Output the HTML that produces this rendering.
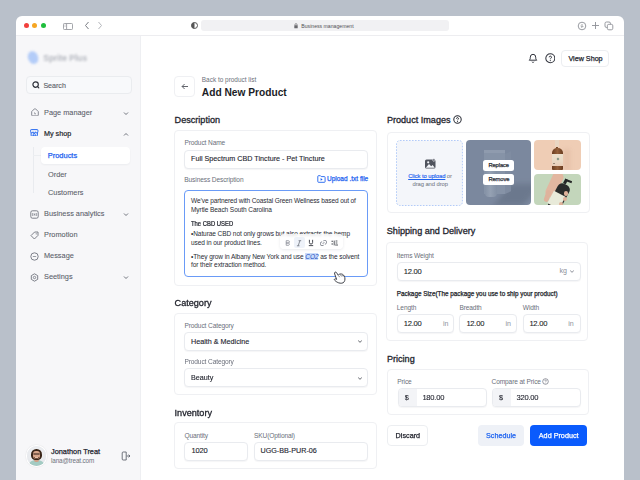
<!DOCTYPE html>
<html><head><meta charset="utf-8">
<style>
*{margin:0;padding:0;box-sizing:border-box}
html,body{width:640px;height:480px;overflow:hidden}
body{background:#b9c0ca;position:relative;font-family:"Liberation Sans",sans-serif;color:#1d1f2a}
.a{position:absolute;white-space:nowrap}
.win{position:absolute;left:16px;top:16px;width:608px;height:470px;background:#fff;border-radius:6px 6px 0 0;overflow:hidden}
.tb{position:absolute;left:16px;top:16px;width:608px;height:20px;border-bottom:1px solid #ededf0}
.dot{position:absolute;width:5px;height:5px;border-radius:50%;top:23px}
.side{position:absolute;left:16px;top:36px;width:125px;height:450px;background:#f7f7f9;border-right:1px solid #eeeff2}
.t{position:absolute;white-space:nowrap;line-height:10px}
.card{position:absolute;border:1px solid #eff0f3;border-radius:4px;background:#fff}
.inp{position:absolute;border:1px solid #e9ebef;border-radius:4px;background:#fff;box-shadow:0 1px 1px rgba(16,24,40,.04)}
.lbl{position:absolute;white-space:nowrap;font-size:6.6px;letter-spacing:-0.12px;color:#6b6f7b;line-height:8px}
.h{position:absolute;white-space:nowrap;font-size:9.1px;color:#23252e;line-height:12px;-webkit-text-stroke:0.3px #23252e}
.val{position:absolute;white-space:nowrap;font-size:7.2px;color:#23252f;line-height:10px;-webkit-text-stroke:0.12px #23252f}
.sb{-webkit-text-stroke:0.25px currentColor}
.nav{position:absolute;left:44px;white-space:nowrap;font-size:7.35px;color:#5a5e69;line-height:10px;-webkit-text-stroke:0.08px #5a5e69}
.chev{position:absolute}
</style></head><body>
<div class="win"></div>
<div class="tb"></div>
<div class="dot" style="left:23.5px;background:#f2403c"></div>
<div class="dot" style="left:32px;background:#f6a623"></div>
<div class="dot" style="left:40.5px;background:#1fbe3c"></div>
<!-- sidebar toggle -->
<svg class="a" style="left:62.5px;top:22.5px" width="10" height="7" viewBox="0 0 10 7"><rect x="0.5" y="0.5" width="9" height="6" rx="0.8" fill="none" stroke="#9a9ca2" stroke-width="0.9"/><line x1="3.6" y1="0.5" x2="3.6" y2="6.5" stroke="#9a9ca2" stroke-width="0.9"/><path d="M1.5 2 H2.6 M1.5 3.3 H2.6" stroke="#9a9ca2" stroke-width="0.6"/></svg>
<svg class="a" style="left:84px;top:21px" width="6" height="9" viewBox="0 0 6 9"><path d="M4.5 1 L1.5 4.5 L4.5 8" fill="none" stroke="#7a7d84" stroke-width="1"/></svg>
<svg class="a" style="left:97px;top:21px" width="6" height="9" viewBox="0 0 6 9"><path d="M1.5 1 L4.5 4.5 L1.5 8" fill="none" stroke="#b4b6bb" stroke-width="1"/></svg>
<!-- shield -->
<svg class="a" style="left:191px;top:21px" width="7" height="9" viewBox="0 0 7 9"><circle cx="3.5" cy="4.5" r="3" fill="none" stroke="#555" stroke-width="1"/><path d="M3.5 1.5 A3 3 0 0 0 3.5 7.5Z" fill="#555"/></svg>
<!-- address bar -->
<div class="a" style="left:201px;top:20px;width:248px;height:11px;background:#f1f1f3;border-radius:3px"></div>
<svg class="a" style="left:293.5px;top:23px" width="4" height="5.5" viewBox="0 0 4 5.5"><rect x="0.3" y="2.3" width="3.4" height="3" rx="0.3" fill="#6a6a6e"/><path d="M1 2.4 V1.6 A1 1 0 0 1 3 1.6 V2.4" fill="none" stroke="#6a6a6e" stroke-width="0.7"/></svg>
<div class="t" style="left:301.3px;top:21.5px;font-size:5.15px;color:#505055;line-height:9px">Business management</div>
<!-- right toolbar icons -->
<svg class="a" style="left:577px;top:21px" width="10" height="10" viewBox="0 0 10 10"><circle cx="5" cy="5" r="3.8" fill="none" stroke="#8d9096" stroke-width="0.9"/><path d="M5 3 V6.2 M3.6 5 L5 6.4 L6.4 5" fill="none" stroke="#8d9096" stroke-width="0.8"/></svg>
<svg class="a" style="left:591px;top:21px" width="9" height="9" viewBox="0 0 9 9"><path d="M4.5 1 V8 M1 4.5 H8" stroke="#8d9096" stroke-width="0.9"/></svg>
<svg class="a" style="left:604px;top:20.5px" width="10" height="10" viewBox="0 0 10 10"><rect x="1" y="1" width="5.5" height="5.5" rx="1.5" fill="none" stroke="#8d9096" stroke-width="0.9"/><rect x="3.3" y="3.3" width="5.5" height="5.5" rx="1.5" fill="#fff" stroke="#8d9096" stroke-width="0.9"/></svg>

<!-- SIDEBAR -->
<div class="side"></div>
<!-- logo -->
<div class="a" style="left:28.3px;top:51.3px;width:10.2px;height:12.8px;border-radius:50%;background:#b3ccf8;filter:blur(1.2px);transform:rotate(-20deg)"></div>
<div class="t" style="left:43.3px;top:52.8px;font-size:8.4px;font-weight:bold;color:#b4b7bf;filter:blur(1.1px)">Sprite Plus</div>
<!-- search -->
<div class="a" style="left:26px;top:76px;width:106px;height:18px;border:1px solid #eaecef;border-radius:4px;background:#f8f9fb"></div>
<svg class="a" style="left:32px;top:81.2px" width="8" height="8" viewBox="0 0 8 8"><circle cx="3.6" cy="3.6" r="2.7" fill="none" stroke="#2a2d36" stroke-width="1.15"/><path d="M5.6 5.6 L6.8 6.8" stroke="#2a2d36" stroke-width="1.15" stroke-linecap="round"/></svg>
<div class="t" style="left:43.4px;top:80.5px;font-size:7.1px;color:#5a5e68;-webkit-text-stroke:0.12px #5a5e68">Search</div>
<!-- nav -->
<svg class="a" style="left:30.5px;top:107.8px" width="8" height="8.5" viewBox="0 0 8 8.5"><path d="M0.7 3.6 L3.4 0.9 A0.85 0.85 0 0 1 4.6 0.9 L7.3 3.6 V7 A0.9 0.9 0 0 1 6.4 7.9 H1.6 A0.9 0.9 0 0 1 0.7 7 Z" fill="none" stroke="#7a7e88" stroke-width="0.9" stroke-linejoin="round"/><path d="M3 4.6 L4.6 5.8 M4.6 5.8 H3.5" fill="none" stroke="#7a7e88" stroke-width="0.8"/></svg>
<div class="nav" style="top:108px">Page manager</div>
<svg class="chev" style="left:123px;top:110.5px" width="6" height="5" viewBox="0 0 6 5"><path d="M1 1.5 L3 3.5 L5 1.5" fill="none" stroke="#60646e" stroke-width="0.9"/></svg>
<svg class="a" style="left:30.3px;top:128.8px" width="8.5" height="7.6" viewBox="0 0 8.5 7.6"><path d="M1.2 0.6 H7.3 A0.6 0.6 0 0 1 7.9 1.2 V2.6 A1.2 1.2 0 0 1 5.5 2.8 A1.25 1.25 0 0 1 3 2.8 A1.2 1.2 0 0 1 0.6 2.6 V1.2 A0.6 0.6 0 0 1 1.2 0.6Z" fill="none" stroke="#1e63f0" stroke-width="0.95" stroke-linejoin="round"/><path d="M1.1 3.6 V6.4 A0.6 0.6 0 0 0 1.7 7 H6.8 A0.6 0.6 0 0 0 7.4 6.4 V3.6 M3.3 7 V5.3 A0.95 0.95 0 0 1 5.2 5.3 V7" fill="none" stroke="#1e63f0" stroke-width="0.95"/></svg>
<div class="nav" style="top:129px;color:#1d1f2a;font-size:7.2px;-webkit-text-stroke:0.2px currentColor">My shop</div>
<svg class="chev" style="left:123px;top:131.5px" width="6" height="5" viewBox="0 0 6 5"><path d="M1 3.5 L3 1.5 L5 3.5" fill="none" stroke="#60646e" stroke-width="0.9"/></svg>
<div class="a" style="left:32.5px;top:147px;width:1px;height:46px;background:#e9ebef"></div>
<div class="a" style="left:33px;top:155px;width:8px;height:1px;background:#eceef1"></div>
<div class="a" style="left:41px;top:147px;width:89px;height:17px;background:#fff;border-radius:4px;box-shadow:0 1px 2px rgba(20,30,60,.05)"></div>
<div class="nav" style="left:47.8px;top:151.3px;color:#1e63f0;font-size:7.45px;-webkit-text-stroke:0.25px currentColor">Products</div>
<div class="nav" style="left:48px;top:169.5px">Order</div>
<div class="nav" style="left:48px;top:187.5px">Customers</div>
<svg class="a" style="left:30px;top:209.5px" width="9" height="9" viewBox="0 0 9 9"><rect x="0.8" y="0.8" width="7.4" height="7.4" rx="1.6" fill="none" stroke="#70747e" stroke-width="0.9"/><path d="M2.8 3 V6 M4.5 3.6 V5.4 M6.2 3 V6" stroke="#70747e" stroke-width="0.8"/></svg>
<div class="nav" style="top:208.7px">Business analytics</div>
<svg class="chev" style="left:123px;top:211.5px" width="6" height="5" viewBox="0 0 6 5"><path d="M1 1.5 L3 3.5 L5 1.5" fill="none" stroke="#60646e" stroke-width="0.9"/></svg>
<svg class="a" style="left:30px;top:230.5px" width="9" height="9" viewBox="0 0 9 9"><path d="M1 4.6 L4.6 1 H8 V4.4 L4.4 8 Z" fill="none" stroke="#70747e" stroke-width="0.9" stroke-linejoin="round"/><circle cx="6.2" cy="2.8" r="0.6" fill="#70747e"/></svg>
<div class="nav" style="top:229.9px">Promotion</div>
<svg class="a" style="left:30px;top:251.5px" width="9" height="9" viewBox="0 0 9 9"><circle cx="4.5" cy="4.5" r="3.7" fill="none" stroke="#70747e" stroke-width="0.9"/><path d="M2.8 4.5 H6.2" stroke="#70747e" stroke-width="0.7"/></svg>
<div class="nav" style="top:250.9px">Message</div>
<svg class="a" style="left:30px;top:272.5px" width="9" height="9" viewBox="0 0 9 9"><path d="M4.5 0.8 L7.7 2.65 V6.35 L4.5 8.2 L1.3 6.35 V2.65Z" fill="none" stroke="#70747e" stroke-width="0.9" stroke-linejoin="round"/><circle cx="4.5" cy="4.5" r="1.2" fill="none" stroke="#70747e" stroke-width="0.8"/></svg>
<div class="nav" style="top:271.9px">Seetings</div>
<svg class="chev" style="left:123px;top:274.5px" width="6" height="5" viewBox="0 0 6 5"><path d="M1 1.5 L3 3.5 L5 1.5" fill="none" stroke="#60646e" stroke-width="0.9"/></svg>
<!-- user -->
<div class="a" style="left:26.8px;top:446.4px;width:19.6px;height:19.6px;border-radius:50%;background:radial-gradient(circle at 50% 40%,#f4f5f7,#dfe2e7);overflow:hidden;filter:blur(0.25px);box-shadow:0 0 0 1px #ffffff,0 0 1px 1.5px rgba(0,0,0,.06)">
 <div class="a" style="left:2px;top:13.5px;width:15.6px;height:9px;border-radius:50% 50% 0 0;background:#a3cbc3"></div>
 <div class="a" style="left:7px;top:11.5px;width:5.6px;height:4px;background:#cf9f86;border-radius:0 0 2px 2px"></div>
 <div class="a" style="left:4.2px;top:2.2px;width:11px;height:11.5px;border-radius:48% 48% 40% 40%;background:#3a2619"></div>
 <div class="a" style="left:6.2px;top:4.6px;width:7px;height:7.8px;border-radius:40% 40% 45% 45%;background:#d9a68b"></div>
 <div class="a" style="left:6.6px;top:6.6px;width:6.2px;height:1.8px;border:0.5px solid rgba(74,52,40,.6);border-radius:1px"></div>
 <div class="a" style="left:7px;top:10.2px;width:5.2px;height:2.6px;background:rgba(74,48,32,.75);border-radius:0 0 3px 3px"></div>
 <div class="a" style="left:8.4px;top:10.6px;width:2.6px;height:0.9px;background:#e8c0a8"></div>
</div>
<div class="t" style="left:51px;top:446.5px;font-size:7.37px;color:#23252f;-webkit-text-stroke:0.25px currentColor">Jonathon Treat</div>
<div class="t" style="left:51px;top:455.7px;font-size:6.35px;letter-spacing:-0.12px;color:#6f737d">lana@treat.com</div>
<svg class="a" style="left:120.5px;top:451px" width="10" height="10" viewBox="0 0 10 10"><path d="M5.2 1 H2.2 A1 1 0 0 0 1.2 2 V8 A1 1 0 0 0 2.2 9 H5.2 V1" fill="none" stroke="#60646e" stroke-width="0.9"/><path d="M5.6 5 H9 M7.6 3.6 L9 5 L7.6 6.4" fill="none" stroke="#60646e" stroke-width="0.9"/></svg>

<!-- MAIN HEADER -->
<div class="a" style="left:174px;top:76px;width:20.5px;height:20.6px;border:1px solid #eff0f3;border-radius:4px;background:#fff"></div>
<svg class="a" style="left:181px;top:83px" width="8" height="7" viewBox="0 0 8 7"><path d="M7 3.5 H1.2 M3.6 1 L1.1 3.5 L3.6 6" fill="none" stroke="#3a3d46" stroke-width="0.8"/></svg>
<div class="t" style="left:201.8px;top:75.8px;font-size:6.45px;color:#6b6f7b;line-height:8px">Back to product list</div>
<div class="t" style="left:201.8px;top:86.7px;font-size:10.2px;font-weight:bold;color:#1b1d26;line-height:12px">Add New Product</div>
<svg class="a" style="left:528px;top:53px" width="10" height="10.5" viewBox="0 0 10 10.5"><path d="M1.2 7.2 C2.2 6.4 2.3 5.6 2.3 4.2 A2.7 2.9 0 0 1 7.7 4.2 C7.7 5.6 7.8 6.4 8.8 7.2 Z" fill="none" stroke="#33363f" stroke-width="1" stroke-linejoin="round"/><path d="M4 8.8 A1.1 1 0 0 0 6 8.8" fill="none" stroke="#33363f" stroke-width="1"/></svg>
<svg class="a" style="left:544.5px;top:53.4px" width="10.6" height="10.6" viewBox="0 0 10.6 10.6"><circle cx="5.3" cy="5.3" r="4.5" fill="none" stroke="#33363f" stroke-width="1.05"/><path d="M4.2 4.3 A1.15 1.15 0 1 1 5.8 5.3 C5.4 5.55 5.3 5.8 5.3 6.3" fill="none" stroke="#33363f" stroke-width="1"/><circle cx="5.3" cy="7.6" r="0.6" fill="#33363f"/></svg>
<div class="a" style="left:561.4px;top:49.7px;width:48px;height:17.8px;border:1px solid #eceef1;border-radius:4px;background:#fff"></div>
<div class="t" style="left:568.4px;top:53.7px;font-size:7.2px;color:#23252f;-webkit-text-stroke:0.25px currentColor">View Shop</div>

<!-- DESCRIPTION -->
<div class="h" style="left:174.6px;top:114.2px">Description</div>
<div class="card" style="left:174.2px;top:130.2px;width:203px;height:155.9px"></div>
<div class="lbl" style="left:184.4px;top:139.2px">Product Name</div>
<div class="inp" style="left:184.1px;top:149.6px;width:184px;height:19.0px"></div>
<div class="val" style="left:191px;top:154.2px">Full Spectrum CBD Tincture - Pet Tincture</div>
<div class="lbl" style="left:184.3px;top:176.0px">Business Description</div>
<svg class="a" style="left:316.5px;top:175px" width="9" height="8" viewBox="0 0 9 8"><path d="M0.8 1.4 A0.7 0.7 0 0 1 1.5 0.7 H3.4 L4.2 1.6 H7.4 A0.7 0.7 0 0 1 8.1 2.3 V6.6 A0.7 0.7 0 0 1 7.4 7.3 H1.5 A0.7 0.7 0 0 1 0.8 6.6Z" fill="none" stroke="#1e63f0" stroke-width="0.9"/><path d="M3.6 3 L5.6 4.4 L3.6 5.8Z" fill="#1e63f0"/></svg>
<div class="t" style="left:327px;top:174.1px;font-size:6.5px;color:#1e63f0;-webkit-text-stroke:0.25px currentColor">Upload .txt file</div>
<div class="a" style="left:184px;top:189.7px;width:184px;height:87.8px;border:1.3px solid #6a9bf7;border-radius:4px;background:#fff"></div>
<div class="t" style="left:191px;top:195.8px;font-size:6.55px;letter-spacing:-0.12px;color:#2a2d36">We&#8217;ve partnered with Coastal Green Wellness based out of</div>
<div class="t" style="left:191px;top:205px;font-size:6.55px;letter-spacing:-0.09px;color:#2a2d36">Myrtle Beach South Carolina</div>
<div class="t" style="left:191.3px;top:218.6px;font-size:6.85px;color:#1b1d26;-webkit-text-stroke:0.22px currentColor;transform:scaleX(0.86);transform-origin:0 0">The CBD USED</div>
<div class="t" style="left:191px;top:229.2px;font-size:6.55px;letter-spacing:-0.09px;color:#2a2d36">&#8226;Naturae CBD not only grows but also extracts the hemp</div>
<div class="t" style="left:191px;top:238px;font-size:6.55px;letter-spacing:-0.09px;color:#2a2d36">used in our product lines.</div>
<div class="t" style="left:191px;top:251.7px;font-size:6.55px;letter-spacing:-0.09px;color:#2a2d36">&#8226;They grow in Albany New York and use <span style="background:#c9dcfb;color:#1e4fc0;font-style:italic">CO2</span> as the solvent</div>
<div class="t" style="left:191px;top:260.3px;font-size:6.55px;letter-spacing:-0.09px;color:#2a2d36">for their extraction method.</div>
<!-- format toolbar -->
<div class="a" style="left:279.8px;top:234.2px;width:63.3px;height:15.3px;background:rgba(255,255,255,.8);backdrop-filter:blur(1.2px);border-radius:4px;box-shadow:0 1px 3px rgba(30,40,70,.10)"></div>
<div class="a" style="left:294px;top:237px;width:10.7px;height:10.9px;background:#eef2f9;border-radius:2px"></div>
<svg class="a" style="left:284.5px;top:239.5px" width="6" height="6" viewBox="0 0 6 6"><path d="M1.2 0.7 H3.3 A1.15 1.15 0 0 1 3.3 3 H1.2Z M1.2 3 H3.6 A1.25 1.25 0 0 1 3.6 5.3 H1.2Z" fill="none" stroke="#8a8e98" stroke-width="0.8"/></svg>
<svg class="a" style="left:296.3px;top:239.5px" width="6" height="7" viewBox="0 0 6 7"><path d="M2.6 0.7 H5.2 M0.9 5.8 H3.5 M3.9 0.7 L2.2 5.8" fill="none" stroke="#6f737d" stroke-width="0.8"/></svg>
<svg class="a" style="left:308px;top:239.3px" width="6" height="7.5" viewBox="0 0 6 7.5"><path d="M1.4 0.8 V3.5 A1.6 1.6 0 0 0 4.6 3.5 V0.8 M0.8 6.6 H5.2" fill="none" stroke="#2a2d36" stroke-width="0.85"/></svg>
<svg class="a" style="left:319.5px;top:239.5px" width="7" height="6" viewBox="0 0 7 6"><path d="M2.6 4.8 H2 A1.8 1.8 0 0 1 2 1.2 H3 M4.4 1.2 H5 A1.8 1.8 0 0 1 5 4.8 H4 M2.4 3 H4.6" fill="none" stroke="#8d919a" stroke-width="0.9" transform="rotate(-30 3.5 3)"/></svg>
<svg class="a" style="left:331px;top:239.5px" width="8" height="6" viewBox="0 0 8 6"><path d="M1.2 0.8 V1.8 M1.2 3.4 V4.4" stroke="#2a2d36" stroke-width="1.3"/><path d="M3.2 0.6 V5.4 M4.2 5 H7 M4.6 3 H6.4 M4.6 1 H6.4" stroke="#2a2d36" stroke-width="0.8"/></svg>
<!-- hand cursor -->
<svg class="a" style="left:333px;top:270.5px" width="13.5" height="13.5" viewBox="0 0 13.5 13.5"><path d="M2 1.2 C2.8 0.8 3.6 1.4 4.2 2.6 L5.2 4.2 C5.8 3.2 7 2.8 8.5 3 C10 3.2 11.4 4.6 11.8 6.5 C12.2 8.5 11.8 10.8 10.1 11.8 C8.4 12.6 6 12.2 4.2 11.2 C3 10.5 1.8 9.6 1.4 8.8 C1.2 8.1 2 7.6 2.8 8 L3.6 8.4 L1.7 3 C1.4 2.2 1.5 1.5 2 1.2 Z" fill="#fff" stroke="#2a2d36" stroke-width="0.9" stroke-linejoin="round"/><path d="M5.6 4.6 L6.6 6.2 M7.6 3.6 L8.4 5.4 M9.6 4 L10.2 5.6" stroke="#2a2d36" stroke-width="0.6"/></svg>
<!-- CATEGORY -->
<div class="h" style="left:174.6px;top:296.9px">Category</div>
<div class="card" style="left:174.2px;top:312.9px;width:203px;height:82px"></div>
<div class="lbl" style="left:184.4px;top:322.2px">Product Category</div>
<div class="inp" style="left:184.1px;top:331.9px;width:184px;height:19.3px"></div>
<div class="val" style="left:191px;top:336.8px">Health &amp; Medicine</div>
<svg class="a" style="left:357px;top:339px" width="6" height="5" viewBox="0 0 6 5"><path d="M1.2 1.6 L3 3.3 L4.8 1.6" fill="none" stroke="#3a3d46" stroke-width="0.8"/></svg>
<div class="lbl" style="left:184.4px;top:358.2px">Product Category</div>
<div class="inp" style="left:184.1px;top:368.1px;width:184px;height:19.3px"></div>
<div class="val" style="left:191px;top:373.2px">Beauty</div>
<svg class="a" style="left:357px;top:375.5px" width="6" height="5" viewBox="0 0 6 5"><path d="M1.2 1.6 L3 3.3 L4.8 1.6" fill="none" stroke="#3a3d46" stroke-width="0.8"/></svg>

<!-- INVENTORY -->
<div class="h" style="left:174.6px;top:407px">Inventory</div>
<div class="card" style="left:174.2px;top:422.2px;width:203px;height:46.6px"></div>
<div class="lbl" style="left:184.4px;top:432.1px">Quantity</div>
<div class="lbl" style="left:254px;top:432.1px">SKU(Optional)</div>
<div class="inp" style="left:184.1px;top:441.8px;width:64.3px;height:19.3px"></div>
<div class="inp" style="left:254px;top:441.8px;width:114px;height:19.3px"></div>
<div class="val" style="left:191.6px;top:446.4px;font-size:7.5px;letter-spacing:-0.2px">1020</div>
<div class="val" style="left:260.5px;top:446.4px">UGG-BB-PUR-06</div>

<!-- PRODUCT IMAGES -->
<div class="h" style="left:386.9px;top:113.9px">Product Images</div>
<svg class="a" style="left:452.8px;top:115.4px" width="9" height="9" viewBox="0 0 9 9"><circle cx="4.5" cy="4.5" r="3.7" fill="none" stroke="#2a2d36" stroke-width="1.05"/><path d="M3.5 3.7 A1 1 0 1 1 4.9 4.5 C4.6 4.7 4.5 4.9 4.5 5.3" fill="none" stroke="#2a2d36" stroke-width="0.95"/><circle cx="4.5" cy="6.5" r="0.55" fill="#2a2d36"/></svg>
<div class="card" style="left:387px;top:131.6px;width:203px;height:81.9px"></div>
<svg class="a" style="left:396px;top:139.8px" width="67" height="66" viewBox="0 0 67 66"><rect x="0.5" y="0.5" width="65.9" height="65" rx="3.5" fill="#f4f6fa" stroke="#b3cbf8" stroke-width="1" stroke-dasharray="1.6 1.4"/></svg>
<svg class="a" style="left:424px;top:157.5px" width="13" height="12" viewBox="0 0 13 12"><rect x="1" y="1.5" width="10.5" height="9" rx="1.5" fill="#50545e"/><path d="M1.8 9.8 L5 6 L7.2 8.2 L8.6 7 L10.8 9.8Z" fill="#f4f6fa"/><circle cx="4.2" cy="4.3" r="1.1" fill="#f4f6fa"/><path d="M9.8 0.6 V3.4 M8.4 2 H11.2" stroke="#f4f6fa" stroke-width="1.4"/><path d="M9.8 0.8 V3.2 M8.6 2 H11" stroke="#50545e" stroke-width="0.7"/></svg>
<div class="t" style="left:408.2px;top:171.4px;font-size:5.85px;letter-spacing:-0.08px;color:#6b6f7b"><span style="color:#1e63f0;text-decoration:underline;-webkit-text-stroke:0.15px #1e63f0">Click to upload</span> or</div>
<div class="t" style="left:412.5px;top:179px;font-size:5.85px;letter-spacing:-0.08px;color:#6b6f7b">drag and drop</div>
<!-- main image -->
<div class="a" style="left:465.9px;top:139.9px;width:65.2px;height:65px;border-radius:4px;overflow:hidden;background:#7b889e">
  <div class="a" style="left:36px;top:44px;width:30px;height:22px;background:rgba(95,108,128,.55);filter:blur(3px);transform:skewX(-40deg)"></div>
  <div class="a" style="left:18px;top:12px;width:21px;height:42px;background:#8693a7"></div>
  <div class="a" style="left:39px;top:14px;width:5.5px;height:40px;background:#7f8ca1;transform:skewY(-25deg);transform-origin:0 0"></div>
  <div class="a" style="left:18px;top:10px;width:21px;height:3px;background:#8f9bae"></div>
  <div class="a" style="left:19px;top:30px;width:12.5px;height:27px;border-radius:2px 2px 4px 4px;background:linear-gradient(90deg,#8592a6,#95a1b3 45%,#8390a4)"></div>
</div>
<div class="a" style="left:483.4px;top:159.8px;width:30.2px;height:11.5px;background:#fff;border-radius:2.5px"></div>
<div class="t" style="left:488.4px;top:160.4px;font-size:5.8px;letter-spacing:-0.1px;color:#2a2d36;-webkit-text-stroke:0.25px #2a2d36">Replace</div>
<div class="a" style="left:483.4px;top:173.9px;width:30.2px;height:11.2px;background:#fff;border-radius:2.5px"></div>
<div class="t" style="left:488.4px;top:174.4px;font-size:5.8px;letter-spacing:-0.1px;color:#2a2d36;-webkit-text-stroke:0.25px #2a2d36">Remove</div>
<!-- peach image -->
<div class="a" style="left:534.3px;top:139.9px;width:46.4px;height:30.6px;border-radius:4px;overflow:hidden;background:#efcdb5">
  <div class="a" style="left:29.5px;top:9px;width:6px;height:22px;background:rgba(190,140,110,.18);filter:blur(2px)"></div>
  <div class="a" style="left:20.8px;top:0;width:3.8px;height:7.5px;background:#e9d6c2;border-radius:0 0 1px 1px"></div>
  <div class="a" style="left:21.4px;top:6.8px;width:2.8px;height:2.5px;background:#7a4a2a"></div>
  <div class="a" style="left:17.4px;top:8.4px;width:11.6px;height:22px;border-radius:5px 5px 1px 1px;background:linear-gradient(90deg,#6a3d20,#94603a 50%,#683b1f)"></div>
  <div class="a" style="left:17.5px;top:14.6px;width:11.4px;height:11.8px;background:linear-gradient(180deg,#ece1ce 0%,#eadac5 60%,#e9cdb8 100%)"></div>
  <div class="a" style="left:22.3px;top:18.3px;width:2px;height:2px;background:#7f9080;transform:rotate(45deg)"></div>
  <div class="a" style="left:18.5px;top:23.5px;width:2.5px;height:0.8px;background:#9a8a78"></div>
</div>
<!-- green image -->
<div class="a" style="left:534.3px;top:174.4px;width:46.4px;height:30.5px;border-radius:4px;overflow:hidden;background:#c3d6bb">
  <div class="a" style="left:14.7px;top:-3px;width:10.5px;height:27px;background:#e2b7a0;border-radius:5px;transform:rotate(25deg)"></div>
  <div class="a" style="left:10.5px;top:16px;width:5px;height:12px;background:#dfb39c;border-radius:3px;transform:rotate(18deg)"></div>
  <div class="a" style="left:18.4px;top:8.4px;width:13px;height:27px;border-radius:5px 5px 2px 2px;background:#2a2c2b;transform:rotate(28deg)"></div>
  <div class="a" style="left:29.3px;top:4.8px;width:3px;height:5px;background:#252726;transform:rotate(28deg)"></div>
  <div class="a" style="left:30.5px;top:5.3px;width:7px;height:2px;background:#252726;transform:rotate(20deg)"></div>
  <div class="a" style="left:15.3px;top:18.3px;width:13.2px;height:13.5px;background:#e8ead9;transform:rotate(28deg)"></div>
  <div class="a" style="left:29.8px;top:16.5px;width:4px;height:5px;background:#e0b39b;border-radius:2.5px"></div>
  <div class="a" style="left:28.8px;top:22.5px;width:4px;height:4px;background:#e0b39b;border-radius:2px"></div>
  <div class="a" style="left:25px;top:27.5px;width:4px;height:4px;background:#e0b39b;border-radius:2px"></div>
</div>

<!-- SHIPPING -->
<div class="h" style="left:386.8px;top:225.3px">Shipping and Delivery</div>
<div class="card" style="left:386.3px;top:242.3px;width:201.5px;height:99px"></div>
<div class="lbl" style="left:396.8px;top:252.4px">Items Weight</div>
<div class="inp" style="left:396.8px;top:262.2px;width:184px;height:19.1px"></div>
<div class="val" style="left:403.8px;top:266.8px;font-size:7.6px;letter-spacing:-0.25px;-webkit-text-stroke:0.1px #1d1f2a;color:#1d1f2a">12.00</div>
<div class="t" style="left:559.5px;top:266.4px;font-size:7.1px;color:#8a8e98">kg</div>
<svg class="a" style="left:569px;top:269px" width="6" height="5" viewBox="0 0 6 5"><path d="M1.2 1.6 L3 3.3 L4.8 1.6" fill="none" stroke="#6b6f7b" stroke-width="0.8"/></svg>
<div class="t" style="left:396.8px;top:289.1px;font-size:6.34px;color:#1d1f2a;-webkit-text-stroke:0.25px currentColor">Package Size(The package you use to ship your product)</div>
<div class="lbl" style="left:396.8px;top:303.9px">Length</div>
<div class="lbl" style="left:459.4px;top:303.9px">Breadth</div>
<div class="lbl" style="left:522.8px;top:303.9px">Width</div>
<div class="inp" style="left:396.8px;top:314.4px;width:57.7px;height:18.8px"></div>
<div class="inp" style="left:459.4px;top:314.4px;width:57.9px;height:18.8px"></div>
<div class="inp" style="left:522.8px;top:314.4px;width:58px;height:18.8px"></div>
<div class="val" style="left:403.8px;top:318.9px;font-size:7.6px;letter-spacing:-0.25px;-webkit-text-stroke:0.1px #1d1f2a;color:#1d1f2a">12.00</div>
<div class="val" style="left:466.4px;top:318.9px;font-size:7.6px;letter-spacing:-0.25px;-webkit-text-stroke:0.1px #1d1f2a;color:#1d1f2a">12.00</div>
<div class="val" style="left:529.4px;top:318.9px;font-size:7.6px;letter-spacing:-0.25px;-webkit-text-stroke:0.1px #1d1f2a;color:#1d1f2a">12.00</div>
<div class="t" style="left:443px;top:318.5px;font-size:7.1px;color:#8f939c">in</div>
<div class="t" style="left:505.5px;top:318.5px;font-size:7.1px;color:#8f939c">in</div>
<div class="t" style="left:568.3px;top:318.5px;font-size:7.1px;color:#8f939c">in</div>

<!-- PRICING -->
<div class="h" style="left:386.9px;top:352.7px">Pricing</div>
<div class="card" style="left:386.7px;top:368.5px;width:202.3px;height:46.2px"></div>
<div class="lbl" style="left:397.2px;top:377.8px">Price</div>
<div class="lbl" style="left:491.5px;top:377.8px">Compare at Price</div>
<svg class="a" style="left:541.8px;top:378px" width="7" height="7" viewBox="0 0 7 7"><circle cx="3.5" cy="3.5" r="2.8" fill="none" stroke="#6b6f7b" stroke-width="0.7"/><path d="M2.8 2.9 A0.75 0.75 0 1 1 3.8 3.5 C3.6 3.65 3.5 3.8 3.5 4.1" fill="none" stroke="#6b6f7b" stroke-width="0.6"/><circle cx="3.5" cy="5" r="0.35" fill="#6b6f7b"/></svg>
<div class="inp" style="left:397.6px;top:388.4px;width:89.4px;height:18.7px;overflow:hidden"><div class="a" style="left:0;top:0;width:18.3px;height:100%;background:#f3f4f7"></div></div>
<div class="inp" style="left:491.5px;top:388.4px;width:89.1px;height:18.7px;overflow:hidden"><div class="a" style="left:0;top:0;width:18.2px;height:100%;background:#f3f4f7"></div></div>
<div class="val" style="left:404.8px;top:392.9px">$</div>
<div class="val" style="left:499px;top:392.9px">$</div>
<div class="val" style="left:422.4px;top:392.9px;font-size:7.6px;letter-spacing:-0.25px;-webkit-text-stroke:0.1px #1d1f2a;color:#1d1f2a">180.00</div>
<div class="val" style="left:516.6px;top:392.9px;font-size:7.6px;letter-spacing:-0.25px;-webkit-text-stroke:0.1px #1d1f2a;color:#1d1f2a">320.00</div>

<!-- BUTTONS -->
<div class="a" style="left:386.9px;top:425.3px;width:41.2px;height:20.3px;border:1px solid #eceef1;border-radius:4px;background:#fff"></div>
<div class="t" style="left:395.6px;top:430.8px;font-size:7.23px;color:#23252f;-webkit-text-stroke:0.25px currentColor">Discard</div>
<div class="a" style="left:478px;top:425.3px;width:46px;height:20.3px;border-radius:4px;background:#eef1f7"></div>
<div class="t" style="left:486px;top:430.8px;font-size:7.2px;color:#1e63f0;-webkit-text-stroke:0.25px currentColor">Schedule</div>
<div class="a" style="left:530.1px;top:425.3px;width:57px;height:20.3px;border-radius:4px;background:#0a5bfd"></div>
<div class="t" style="left:538.8px;top:430.8px;font-size:7.23px;color:#fff;-webkit-text-stroke:0.25px currentColor">Add Product</div>
</body></html>
